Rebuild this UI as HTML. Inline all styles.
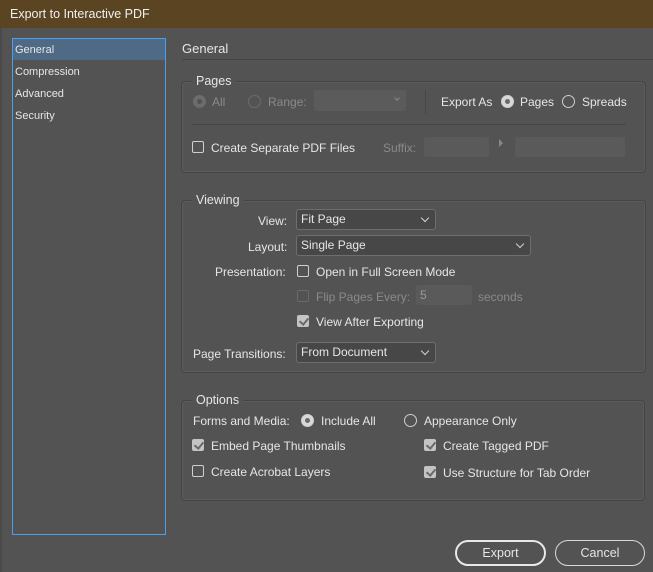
<!DOCTYPE html>
<html><head><meta charset="utf-8"><style>
*{margin:0;padding:0;box-sizing:border-box}
body{width:653px;height:572px;background:#535353;font-family:"Liberation Sans",sans-serif;font-size:12px;color:#e6e6e6;position:relative;overflow:hidden}
.a{position:absolute;white-space:nowrap}
.t{line-height:14px}
.dis{color:#8a8a8a}
.box{position:absolute;border:1px solid #444;border-radius:4px;box-shadow:inset 0 0 0 1px #5c5c5c}
.leg{position:absolute;background:#535353;padding:0 4px;font-size:12.5px;line-height:14px}
.cb{position:absolute;width:12px;height:12px;border:1px solid #cfcfcf;border-radius:2px}
.cb.on{background:#c4c4c4;border-color:#c4c4c4}
.cb.on:after{content:"";position:absolute;left:3px;top:0px;width:4px;height:7px;border:solid #6a6a6a;border-width:0 2px 2px 0;transform:rotate(40deg)}
.cb.d{border-color:#6a6a6a}
.rd{position:absolute;width:13px;height:13px;border:1px solid #cfcfcf;border-radius:50%}
.rd.on{background:#d8d8d8}
.rd.on:after{content:"";position:absolute;left:3px;top:3px;width:5px;height:5px;border-radius:50%;background:#6a6a6a}
.rd.d{border-color:#6c6c6c}
.rd.d.on{background:#6c6c6c}
.rd.d.on:after{background:#535353}
.dd{position:absolute;height:21px;background:#474747;border:1px solid #6e6e6e;border-radius:3px;padding:2px 4px;line-height:15px}
.dd:after{content:"";position:absolute;right:7px;top:5px;width:5px;height:5px;border:solid #d0d0d0;border-width:0 1px 1px 0;transform:rotate(45deg)}
.fld{position:absolute;background:#5a5a5a;border-radius:2px}
.btn{position:absolute;height:26px;border:2px solid #e8e8e8;border-radius:13px;text-align:center;line-height:22px;font-size:12.5px}
</style></head><body>
<div class="a" style="left:0;top:0;width:653px;height:28px;background:#5b4422"></div>
<div class="a t" style="left:10px;top:7px;font-size:12.5px;color:#f0f0f0">Export to Interactive PDF</div>
<div class="a" style="left:0;top:28px;width:2px;height:544px;background:#4a4a4a"></div>

<div class="a" style="left:12px;top:38px;width:154px;height:497px;border:1px solid #4aa0f0"></div>
<div class="a" style="left:13px;top:39px;width:152px;height:21px;background:#4f6a84"></div>
<div class="a t" style="left:15px;top:43px;font-size:11px">General</div>
<div class="a t" style="left:15px;top:65px;font-size:11px">Compression</div>
<div class="a t" style="left:15px;top:87px;font-size:11px">Advanced</div>
<div class="a t" style="left:15px;top:109px;font-size:11px">Security</div>

<div class="a t" style="left:182px;top:42px;font-size:13px">General</div>
<div class="a" style="left:182px;top:59px;width:471px;height:1px;background:#454545"></div>

<!-- Pages -->
<div class="box" style="left:181px;top:81px;width:465px;height:92px"></div>
<div class="leg" style="left:192px;top:74px">Pages</div>
<div class="rd d on" style="left:193px;top:95px"></div>
<div class="a t dis" style="left:212px;top:95px">All</div>
<div class="rd d" style="left:248px;top:95px"></div>
<div class="a t dis" style="left:268px;top:95px">Range:</div>
<div class="fld" style="left:314px;top:90px;width:92px;height:21px;background:#5b5b5b"></div>
<div class="a" style="left:395px;top:96px;width:4px;height:4px;border:solid #888;border-width:0 1px 1px 0;transform:rotate(45deg)"></div>
<div class="a" style="left:425px;top:90px;width:1px;height:24px;background:#474747"></div>
<div class="a t" style="left:441px;top:95px">Export As</div>
<div class="rd on" style="left:501px;top:95px"></div>
<div class="a t" style="left:520px;top:95px">Pages</div>
<div class="rd" style="left:562px;top:95px"></div>
<div class="a t" style="left:582px;top:95px">Spreads</div>
<div class="a" style="left:191px;top:124px;width:435px;height:1px;background:#474747"></div>
<div class="cb" style="left:192px;top:141px"></div>
<div class="a t" style="left:211px;top:141px">Create Separate PDF Files</div>
<div class="a t dis" style="left:383px;top:141px">Suffix:</div>
<div class="fld" style="left:424px;top:137px;width:65px;height:20px"></div>
<div class="a" style="left:499px;top:139px;width:0;height:0;border-left:4px solid #888;border-top:4px solid transparent;border-bottom:4px solid transparent"></div>
<div class="fld" style="left:515px;top:137px;width:110px;height:20px"></div>

<!-- Viewing -->
<div class="box" style="left:181px;top:200px;width:465px;height:173px"></div>
<div class="leg" style="left:192px;top:193px">Viewing</div>
<div class="a t" style="left:258px;top:214px">View:</div>
<div class="dd" style="left:296px;top:209px;width:140px">Fit Page</div>
<div class="a t" style="left:248px;top:240px">Layout:</div>
<div class="dd" style="left:296px;top:235px;width:235px">Single Page</div>
<div class="a t" style="left:215px;top:265px">Presentation:</div>
<div class="cb" style="left:297px;top:265px"></div>
<div class="a t" style="left:316px;top:265px">Open in Full Screen Mode</div>
<div class="cb d" style="left:297px;top:290px"></div>
<div class="a t dis" style="left:316px;top:290px">Flip Pages Every:</div>
<div class="fld" style="left:416px;top:285px;width:56px;height:20px;padding:3px 4px;color:#9a9a9a;line-height:14px">5</div>
<div class="a t dis" style="left:478px;top:290px">seconds</div>
<div class="cb on" style="left:297px;top:315px"></div>
<div class="a t" style="left:316px;top:315px">View After Exporting</div>
<div class="a t" style="left:193px;top:347px">Page Transitions:</div>
<div class="dd" style="left:296px;top:342px;width:140px">From Document</div>

<!-- Options -->
<div class="box" style="left:181px;top:400px;width:464px;height:101px"></div>
<div class="leg" style="left:192px;top:393px">Options</div>
<div class="a t" style="left:193px;top:414px">Forms and Media:</div>
<div class="rd on" style="left:301px;top:414px"></div>
<div class="a t" style="left:321px;top:414px">Include All</div>
<div class="rd" style="left:404px;top:414px"></div>
<div class="a t" style="left:424px;top:414px">Appearance Only</div>
<div class="cb on" style="left:192px;top:439px"></div>
<div class="a t" style="left:211px;top:439px">Embed Page Thumbnails</div>
<div class="cb" style="left:192px;top:465px"></div>
<div class="a t" style="left:211px;top:465px">Create Acrobat Layers</div>
<div class="cb on" style="left:424px;top:439px"></div>
<div class="a t" style="left:443px;top:439px">Create Tagged PDF</div>
<div class="cb on" style="left:424px;top:466px"></div>
<div class="a t" style="left:443px;top:466px">Use Structure for Tab Order</div>

<div class="btn" style="left:455px;top:540px;width:91px">Export</div>
<div class="btn" style="left:555px;top:540px;width:90px;border-color:#d8d8d8;border-width:1px;line-height:24px">Cancel</div>
</body></html>
